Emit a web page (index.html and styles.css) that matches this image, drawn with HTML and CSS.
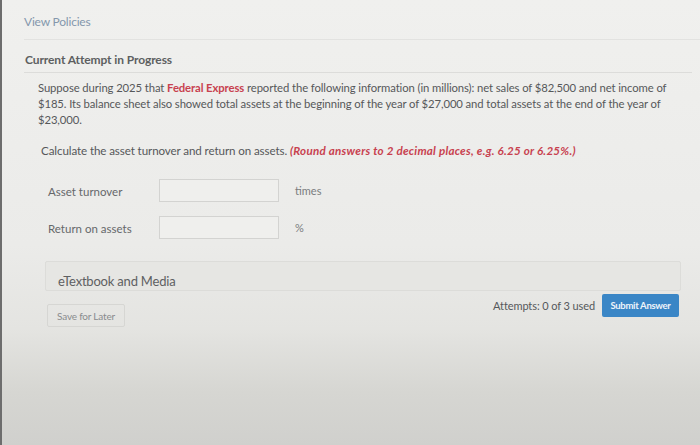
FILE: index.html
```html
<!DOCTYPE html>
<html>
<head>
<meta charset="utf-8">
<link rel="stylesheet" href="styles.css">
</head>
<body>
<div class="screen">
  <div class="top">
    <a class="policies">View Policies</a>
  </div>
  <div class="panel">
    <div class="attempt">Current Attempt in Progress</div>
    <div class="question">
      <p class="para">Suppose during 2025 that <span class="red">Federal Express</span> reported the following information (in millions): net sales of $82,500 and net income of $185. Its balance sheet also showed total assets at the beginning of the year of $27,000 and total assets at the end of the year of $23,000.</p>
      <p class="calc">Calculate the asset turnover and return on assets. <span class="redi">(Round answers to 2 decimal places, e.g. 6.25 or 6.25%.)</span></p>
      <div class="rows">
        <div class="row"><span class="lbl">Asset turnover</span><span class="box"></span><span class="unit">times</span></div>
        <div class="row"><span class="lbl">Return on assets</span><span class="box"></span><span class="unit">%</span></div>
      </div>
      <div class="etext">eTextbook and Media</div>
      <div class="actions">
        <span class="save">Save for Later</span>
        <div class="right">
          <span class="attempts">Attempts: 0 of 3 used</span>
          <span class="submit">Submit Answer</span>
        </div>
      </div>
    </div>
  </div>
</div>
</body>
</html>
```
FILE: styles.css
```css
html, body { margin: 0; padding: 0; }
body {
  width: 700px; height: 445px; overflow: hidden;
  font-family: Lato, "Open Sans", sans-serif;
  color: #56585a;
}
.screen {
  height: 445px;
  border-left: 2px solid #6d6d6d;
  background: linear-gradient(180deg, #f0f0ee 0%, #ebebe9 55%, #e4e4e1 74%, #d6d6d2 88%, #d0d0cd 100%);
  box-sizing: border-box;
}
.top {
  height: 40px; box-sizing: border-box; padding-top: 10px;
  margin-left: 22px; border-bottom: 1px solid #e2e2e0;
}
.policies { color: #8497ac; font-size: 12px; letter-spacing: -0.2px; }
.panel { margin-left: 22px; margin-right: 8px; }
.attempt {
  font-size: 12px; font-weight: bold; color: #5d5f61;
  padding: 13px 0 5px 1px; line-height: 14px;
  border-bottom: 1px solid #dcdcda; letter-spacing: -0.1px;
}
.question { padding: 7px 20px 0 14px; }
.para { margin: 0; font-size: 11.3px; line-height: 16px; width: 636px; letter-spacing: -0.1px; }
.red { color: #c8414f; font-weight: bold; }
.calc { margin: 15px 0 0 3px; font-size: 11.6px; letter-spacing: -0.1px; line-height: 16px; }
.redi { color: #c8414f; font-weight: bold; font-style: italic; letter-spacing: 0.25px; }
.rows { margin-top: 20px; display: flex; flex-direction: column; gap: 14px; }
.row { display: flex; align-items: center; height: 23px; }
.lbl { width: 111px; padding-left: 10px; font-size: 11.5px; color: #66686a; position: relative; top: 1px; }
.box { width: 120px; height: 23px; border: 1px solid #d3d3d1; background: #efefed; box-sizing: border-box; }
.unit { margin-left: 16px; font-size: 11px; color: #7a7c7e; }
.etext {
  margin: 22px 0 0 7px; width: 636px; height: 30px; box-sizing: border-box;
  border: 1px solid #dcdcd9; border-radius: 2px; background: #e6e6e3;
  font-size: 13px; padding: 11px 0 0 12px; color: #5e6062; letter-spacing: -0.2px;
}
.actions { display: flex; justify-content: space-between; align-items: flex-start; margin: 3px 0 0 9px; width: 632px; }
.save {
  margin-top: 10px; border: 1px solid #d6d6d3; border-radius: 2px; height: 23px; width: 78px;
  box-sizing: border-box; font-size: 10px; color: #8a8c8e;
  display: flex; align-items: center; justify-content: center; letter-spacing: -0.2px;
}
.right { display: flex; align-items: center; gap: 7px; }
.attempts { font-size: 11px; color: #55585b; letter-spacing: -0.1px; }
.submit {
  background: #3a86c6; color: #eef4fa; font-size: 9.5px; font-weight: bold;
  height: 23px; width: 77px; border-radius: 2px;
  display: flex; align-items: center; justify-content: center; letter-spacing: -0.3px;
}
```
